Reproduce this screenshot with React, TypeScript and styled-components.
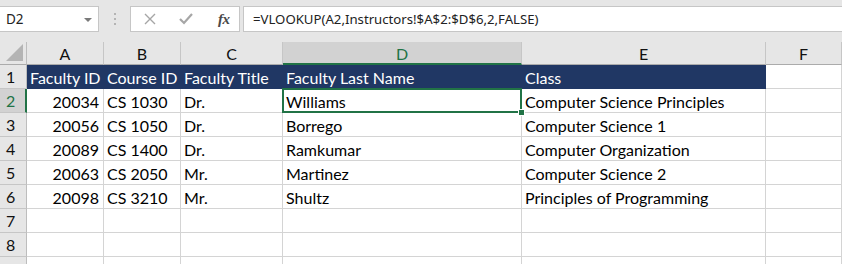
import styled, { createGlobalStyle } from "styled-components";

const GlobalStyle = createGlobalStyle`
  html, body {
    margin: 0;
    padding: 0;
    background: #ffffff;
  }
  body {
    font-family: Lato, "Liberation Sans", sans-serif;
    overflow: hidden;
  }
  * {
    box-sizing: border-box;
  }
`;

const Window = styled.div`
  width: 842px;
  height: 264px;
  overflow: hidden;
  background: #ffffff;
`;

const Toolbar = styled.div`
  height: 42px;
  background: #e6e6e6;
  display: flex;
  align-items: flex-start;
  padding-top: 6px;
`;

const NameBox = styled.div`
  width: 100px;
  height: 26px;
  margin-left: -1px;
  background: #ffffff;
  border: 1px solid #c6c6c6;
  display: flex;
  align-items: center;
  justify-content: space-between;
  padding: 0 6px 0 6px;
  font-family: "Noto Sans", "Open Sans", sans-serif;
  font-size: 13.5px;
  color: #222222;
`;

const Caret = styled.span`
  width: 0;
  height: 0;
  border-left: 4px solid transparent;
  border-right: 4px solid transparent;
  border-top: 4px solid #7a7a7a;
  margin-top: 1px;
`;

const Grip = styled.div`
  width: 31px;
  height: 26px;
  display: flex;
  flex-direction: column;
  align-items: center;
  justify-content: center;
  gap: 3px;
  span {
    width: 2px;
    height: 2px;
    background: #b4b4b4;
  }
`;

const FxBox = styled.div`
  width: 110px;
  height: 26px;
  background: #ffffff;
  border: 1px solid #c6c6c6;
  display: flex;
  align-items: center;
  padding-left: 13px;
  gap: 23px;
`;

const Fx = styled.span`
  font-family: "Liberation Serif", serif;
  font-style: italic;
  font-weight: bold;
  font-size: 15px;
  color: #4a4a4a;
  margin-left: 2px;
  letter-spacing: -0.5px;
`;

const FormulaBar = styled.div`
  flex: 1;
  height: 26px;
  margin-left: 3px;
  margin-right: -2px;
  background: #ffffff;
  border: 1px solid #c6c6c6;
  display: flex;
  align-items: center;
  padding-left: 9px;
  font-family: "Noto Sans", "Open Sans", sans-serif;
  font-size: 13.2px;
  color: #222222;
  white-space: nowrap;
`;

const Sheet = styled.div`
  display: grid;
  grid-template-columns: 27px 77px 77px 102px 239px 244px 76px;
  grid-template-rows: 23px;
  grid-auto-rows: 24px;
`;

const Corner = styled.div`
  background: #e6e6e6;
  border-right: 1px solid #bdbdbd;
  border-bottom: 1px solid #ababab;
  display: flex;
  align-items: flex-end;
  justify-content: flex-end;
  padding: 0 3px 3px 0;
`;

const ColHeader = styled.div<{ $active?: boolean }>`
  background: ${(p) => (p.$active ? "#d2d2d2" : "#e6e6e6")};
  color: ${(p) => (p.$active ? "#217346" : "#111111")};
  border-right: 1px solid #c6c6c6;
  border-bottom: ${(p) => (p.$active ? "2px solid #217346" : "1px solid #ababab")};
  display: flex;
  align-items: center;
  justify-content: center;
  font-size: 16px;
  padding-top: ${(p) => (p.$active ? "1px" : "0")};
`;

const RowHeader = styled.div<{ $active?: boolean }>`
  background: ${(p) => (p.$active ? "#d2d2d2" : "#e6e6e6")};
  color: ${(p) => (p.$active ? "#217346" : "#111111")};
  border-right: ${(p) => (p.$active ? "2px solid #217346" : "1px solid #bdbdbd")};
  border-bottom: 1px solid #c6c6c6;
  display: flex;
  align-items: center;
  padding-left: 6px;
  font-size: 16px;
`;

const Cell = styled.div<{ $fill?: boolean; $right?: boolean; $selected?: boolean }>`
  position: relative;
  z-index: ${(p) => (p.$selected ? 2 : "auto")};
  background: ${(p) => (p.$fill ? "#203764" : "#ffffff")};
  color: ${(p) => (p.$fill ? "#ffffff" : "#000000")};
  border-right: 1px solid ${(p) => (p.$fill ? "#203764" : "#d4d4d4")};
  border-bottom: 1px solid ${(p) => (p.$fill ? "#203764" : "#d4d4d4")};
  display: flex;
  align-items: center;
  justify-content: ${(p) => (p.$right ? "flex-end" : "flex-start")};
  padding: 1px 4px 0 3px;
  font-size: 16px;
  white-space: nowrap;
  overflow: ${(p) => (p.$selected ? "visible" : "hidden")};
`;

const Selection = styled.div`
  position: absolute;
  top: -1px;
  left: -1px;
  right: -1px;
  bottom: -1px;
  border: 2px solid #217346;
  pointer-events: none;
`;

const Handle = styled.div`
  position: absolute;
  right: -5px;
  bottom: -5px;
  width: 7px;
  height: 7px;
  background: #217346;
  border: 1px solid #ffffff;
`;

const columns = ["A", "B", "C", "D", "E", "F"];

const rows: string[][] = [
  ["Faculty ID", "Course ID", "Faculty Title", "Faculty Last Name", "Class", ""],
  ["20034", "CS 1030", "Dr.", "Williams", "Computer Science Principles", ""],
  ["20056", "CS 1050", "Dr.", "Borrego", "Computer Science 1", ""],
  ["20089", "CS 1400", "Dr.", "Ramkumar", "Computer Organization", ""],
  ["20063", "CS 2050", "Mr.", "Martinez", "Computer Science 2", ""],
  ["20098", "CS 3210", "Mr.", "Shultz", "Principles of Programming", ""],
  ["", "", "", "", "", ""],
  ["", "", "", "", "", ""],
  ["", "", "", "", "", ""],
];

function App() {
  return (
    <Window>
      <GlobalStyle />
      <Toolbar>
        <NameBox>
          D2
          <Caret />
        </NameBox>
        <Grip>
          <span />
          <span />
          <span />
        </Grip>
        <FxBox>
          <svg width="12" height="12" viewBox="0 0 12 12">
            <path d="M1 1 L11 11 M11 1 L1 11" stroke="#a6a6a6" strokeWidth="1.4" fill="none" />
          </svg>
          <svg width="14" height="12" viewBox="0 0 14 12">
            <path d="M1 6 L5 10 L13 1" stroke="#a6a6a6" strokeWidth="2.2" fill="none" />
          </svg>
          <Fx>fx</Fx>
        </FxBox>
        <FormulaBar>=VLOOKUP(A2,Instructors!$A$2:$D$6,2,FALSE)</FormulaBar>
      </Toolbar>
      <Sheet>
        <Corner>
          <svg width="17" height="17" viewBox="0 0 17 17">
            <path d="M17 0 L17 17 L0 17 Z" fill="#b4b4b4" />
          </svg>
        </Corner>
        {columns.map((c) => (
          <ColHeader key={c} $active={c === "D"}>
            {c}
          </ColHeader>
        ))}
        {rows.map((row, r) => [
          <RowHeader key={`h${r}`} $active={r === 1}>
            {r < 8 ? r + 1 : ""}
          </RowHeader>,
          ...row.map((value, c) => {
            const selected = r === 1 && c === 3;
            return (
              <Cell
                key={`${r}-${c}`}
                $fill={r === 0 && c < 5}
                $right={r > 0 && c === 0}
                $selected={selected}
              >
                {value}
                {selected && (
                  <Selection>
                    <Handle />
                  </Selection>
                )}
              </Cell>
            );
          }),
        ])}
      </Sheet>
    </Window>
  );
}

export default App;
